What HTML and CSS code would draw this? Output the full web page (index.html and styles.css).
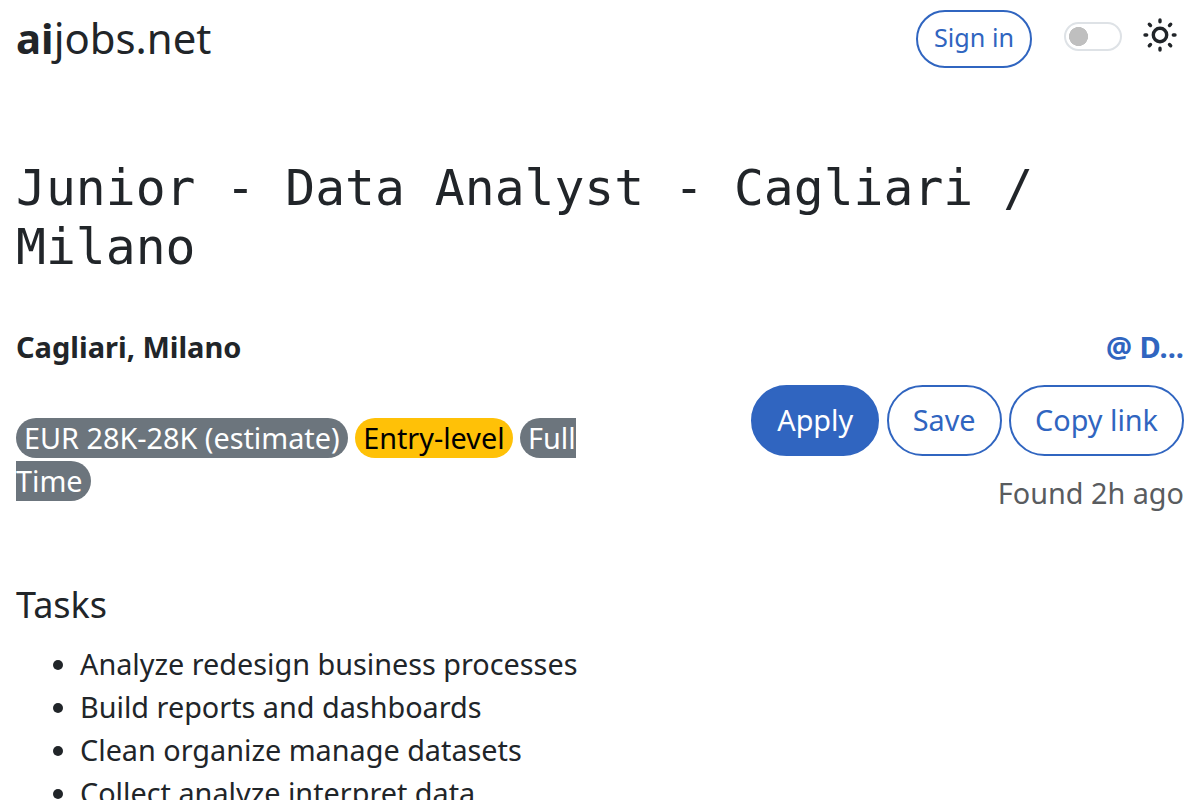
FILE: index.html
```html
<!DOCTYPE html>
<html lang="en">
<head>
  <meta charset="UTF-8" />
  <meta name="viewport" content="width=device-width, initial-scale=1.0"/>
  <title>Junior - Data Analyst - Cagliari / Milano | aijobs.net</title>
  <link rel="stylesheet" href="styles.css">
</head>
<body>
  <nav class="navbar">
    <a class="brand" href="#"><b>ai</b>jobs.net</a>
    <div class="nav-right">
      <a class="btn btn-sm" href="#">Sign in</a>
      <input class="switch" type="checkbox" role="switch" aria-label="Toggle theme" />
      <svg class="sun" viewBox="-17 -17 34 34" fill="none" stroke="currentColor" stroke-width="3.4" stroke-linecap="round" aria-hidden="true">
        <circle r="6.7"/>
        <path d="M0-15v1.7M0 15v-1.7M-15 0h1.7M15 0h-1.7M-10.7-10.7l1.2 1.2M10.7-10.7l-1.2 1.2M-10.7 10.7l1.2-1.2M10.7 10.7l-1.2-1.2"/>
      </svg>
    </div>
  </nav>

  <main>
    <h1>Junior - Data Analyst - Cagliari / Milano</h1>
    <div class="company-row">
      <h3>Cagliari, Milano</h3>
      <a class="company" href="#">@ D...</a>
    </div>
    <div class="meta-row">
      <div class="badges">
        <span class="badge">EUR 28K-28K (estimate)</span>
        <span class="badge badge-level">Entry-level</span>
        <span class="badge">Full Time</span>
      </div>
      <div class="actions">
        <div class="buttons">
          <a class="btn btn-primary" href="#">Apply</a>
          <a class="btn" href="#">Save</a>
          <a class="btn" href="#">Copy link</a>
        </div>
        <p class="found">Found 2h ago</p>
      </div>
    </div>

    <h2>Tasks</h2>
    <ul>
      <li>Analyze redesign business processes</li>
      <li>Build reports and dashboards</li>
      <li>Clean organize manage datasets</li>
      <li>Collect analyze interpret data</li>
    </ul>
  </main>
</body>
</html>
```

FILE: styles.css
```css
* {
  box-sizing: border-box;
}

body {
  margin: 0;
  padding: 0 16px;
  height: 100vh;
  overflow: hidden;
  font-family: "Noto Sans", sans-serif;
  font-size: 28.8px;
  line-height: 43.2px;
  color: #212529;
  background: #fff;
}

a {
  text-decoration: none;
}

.navbar {
  display: flex;
  justify-content: space-between;
  align-items: center;
  height: 78px;
}

.brand {
  padding-bottom: 2px;
  color: #212529;
  font-size: 41.9px;
}

.nav-right {
  display: flex;
  align-items: center;
}

.btn {
  display: inline-block;
  padding: 11px 24px 13px;
  border: 2px solid #3065c0;
  border-radius: 36px;
  color: #3065c0;
  line-height: 43px;
}

.btn-primary {
  background: #3065c0;
  color: #fff;
}

.btn-sm {
  padding: 6px 16px 10px;
  font-size: 25.2px;
  line-height: 38px;
}

.switch {
  appearance: none;
  width: 58px;
  height: 29px;
  margin: 0 21px 5px 32px;
  border: 2px solid #dee2e6;
  border-radius: 29px;
  background: radial-gradient(circle at 12.5px 12.5px, #bfbfbf 9.2px, transparent 9.8px);
}

.sun {
  width: 34px;
  height: 34px;
  margin: 0 7px 8px 0;
}

h1 {
  margin: 81px 0 0;
  font-family: "DejaVu Sans Mono", monospace;
  font-size: 49.7px;
  font-weight: 400;
  line-height: 59px;
}

.company-row {
  display: flex;
  justify-content: space-between;
  margin-top: 48px;
}

h3 {
  margin: 0;
  font-size: 29px;
}

.company {
  color: #3065c0;
  font-size: 29px;
  font-weight: 700;
}

.meta-row {
  display: flex;
  justify-content: space-between;
  margin-top: 16.4px;
}

.badges {
  width: 584px;
  padding-top: 31.5px;
  line-height: 43px;
}

.badge {
  padding: 0 8px 1px;
  border-radius: 20px;
  background: #6c757d;
  color: #fff;
}

.badge-level {
  background: #ffc107;
  color: #000;
}

.buttons {
  display: flex;
  gap: 7.5px;
}

.found {
  margin: 15.6px 0 0;
  color: #595c5f;
  text-align: right;
}

h2 {
  margin: 69px 0 15px;
  font-size: 36px;
  font-weight: 400;
}

ul {
  margin: 0;
  padding-left: 64px;
}
```
